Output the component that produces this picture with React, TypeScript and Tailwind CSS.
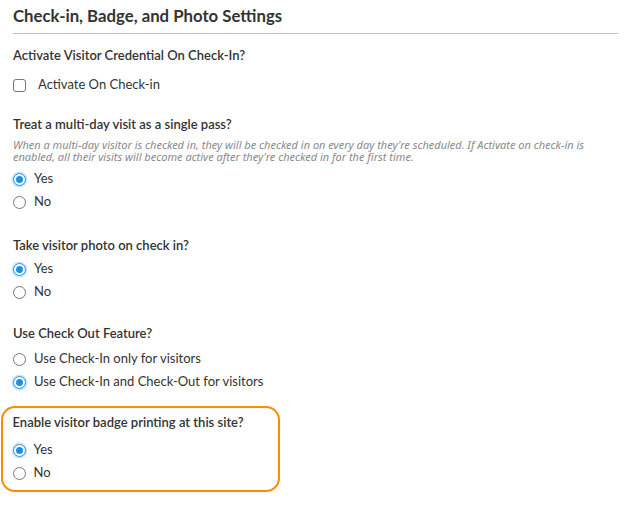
import React from "react";

function Radio({ checked, label }: { checked?: boolean; label: string }) {
  return (
    <div className="flex h-[20px] items-center">
      {checked ? (
        <span className="flex h-[13px] w-[13px] items-center justify-center rounded-full border-[1.5px] border-[#1d8fe1] shadow-[0_0_0_1.5px_#cfe6fa]">
          <span className="h-[7px] w-[7px] rounded-full bg-[#1d8fe1]" />
        </span>
      ) : (
        <span className="h-[13px] w-[13px] rounded-full border border-[#777]" />
      )}
      <span className="ml-[8px] text-[13px] text-[#333]">{label}</span>
    </div>
  );
}

function Heading({ children }: { children: React.ReactNode }) {
  return (
    <div className="flex h-[20px] items-center text-[13px] font-semibold text-[#333]">
      {children}
    </div>
  );
}

export default function App() {
  return (
    <div
      className="h-[505px] w-[644px] bg-white pl-[13px] pr-[26px]"
      style={{ fontFamily: "Lato, 'Noto Sans', sans-serif" }}
    >
      <div className="flex h-[32px] items-center text-[16.75px] font-bold text-[#333]">
        Check-in, Badge, and Photo Settings
      </div>
      <div className="mt-[1px] h-px w-[605px] bg-[#bdbdbd]" />

      <div className="mt-[12px]">
        <Heading>Activate Visitor Credential On Check-In?</Heading>
      </div>
      <div className="mt-[9px] flex h-[20px] items-center">
        <span className="h-[13px] w-[13px] rounded-[3px] border border-[#777]" />
        <span className="ml-[12px] text-[13px] text-[#333]">Activate On Check-in</span>
      </div>

      <div className="mt-[20px]">
        <Heading>Treat a multi-day visit as a single pass?</Heading>
      </div>
      <div
        className="mt-[4px] whitespace-nowrap text-[11px] italic leading-[12px] text-[#8a8a8a]"
        style={{ fontFamily: "'Noto Sans', sans-serif" }}
      >
        <div className="h-[12px]">
          When a multi-day visitor is checked in, they will be checked in on every day they're scheduled. If Activate on check-in is
        </div>
        <div className="h-[12px]">
          enabled, all their visits will become active after they're checked in for the first time.
        </div>
      </div>
      <div className="mt-[6px] flex flex-col gap-[3px]">
        <Radio checked label="Yes" />
        <Radio label="No" />
      </div>

      <div className="mt-[24px]">
        <Heading>Take visitor photo on check in?</Heading>
      </div>
      <div className="mt-[3px] flex flex-col gap-[3px]">
        <Radio checked label="Yes" />
        <Radio label="No" />
      </div>

      <div className="mt-[22px]">
        <Heading>Use Check Out Feature?</Heading>
      </div>
      <div className="mt-[5px] flex flex-col gap-[3px]">
        <Radio label="Use Check-In only for visitors" />
        <Radio checked label="Use Check-In and Check-Out for visitors" />
      </div>

      <div className="ml-[-12px] mt-[14px] h-[86px] w-[279px] rounded-[14px] border-[2.5px] border-[#ff8c00] pl-[9.5px] pt-[5px]">
        <Heading>Enable visitor badge printing at this site?</Heading>
        <div className="mt-[7px] flex flex-col gap-[3px]">
          <Radio checked label="Yes" />
          <Radio label="No" />
        </div>
      </div>
    </div>
  );
}
